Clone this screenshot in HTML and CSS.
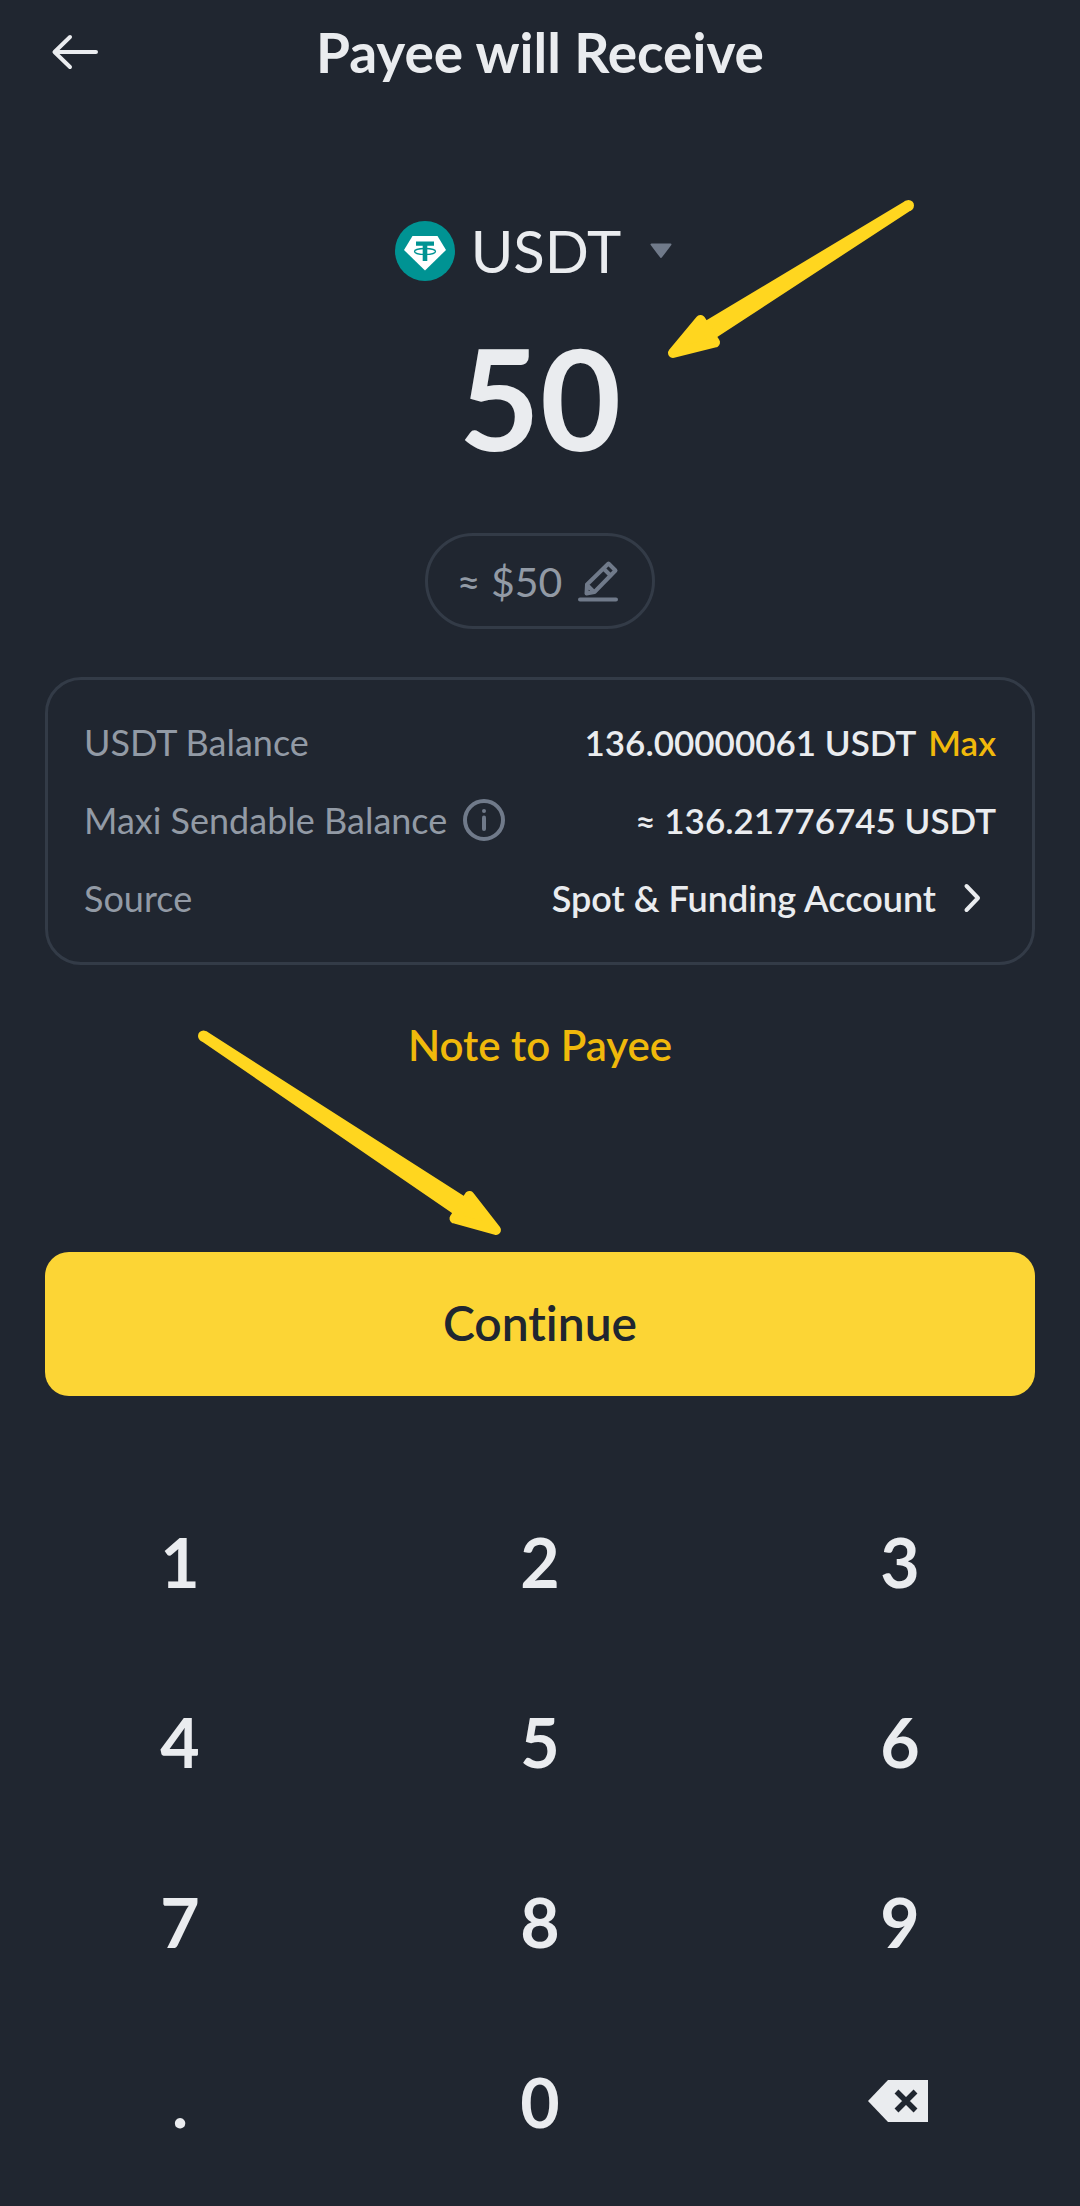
FILE: index.html
```html
<!DOCTYPE html>
<html lang="en">
<head>
  <meta charset="utf-8">
  <meta name="viewport" content="width=device-width, initial-scale=1">
  <title>Payee will Receive</title>
  <link rel="stylesheet" href="styles.css">
</head>
<body>
  <header class="topbar">
    <button class="back" type="button" aria-label="Back">
      <svg width="48" height="40" viewBox="0 0 48 40" fill="none" stroke="currentColor" stroke-width="4" stroke-linecap="round" stroke-linejoin="round"><path d="M20 5 4.500 20 20 35M5 20h41"/></svg>
    </button>
    <h1 class="title">Payee will Receive</h1>
  </header>

  <main>
    <section class="amount-block">
      <button class="token" type="button">
        <svg width="60" height="60" viewBox="0 0 60 60">
          <circle cx="30" cy="30" r="30" fill="#009393"/>
          <path d="M17.500 15h25L51 29 30 49.500 9 29z" fill="#fff"/>
          <path d="M21 20.500h18v4.200h-6.700V40h-4.600V24.700H21z" fill="#009393"/>
          <ellipse cx="30" cy="30.500" rx="10.500" ry="3" fill="none" stroke="#009393" stroke-width="1.300"/>
        </svg>
        <span>USDT</span>
        <svg width="48" height="48" viewBox="0 0 48 48"><path d="M14.500 17.500h19L24 30z" fill="#707a8a" stroke="#707a8a" stroke-width="2" stroke-linejoin="round"/></svg>
      </button>
      <input class="amount" type="text" inputmode="none" aria-label="Amount" value="50">
      <button class="fiat" type="button">
        <span>≈ $50</span>
        <svg width="44" height="44" viewBox="0 0 44 44" fill="none" stroke="#707a8a" stroke-width="4" stroke-linecap="round" stroke-linejoin="round"><path d="M4 40.500h36M11 25.500 32.500 4.500l7 7L18.500 33l-8 1.500zM28 10l6 6M12 27l5.500 5.500"/></svg>
      </button>
      <svg class="pointer pointer-amount" width="300" height="200" viewBox="0 0 300 200" fill="#ffd61f" aria-hidden="true">
        <circle cx="268.500" cy="25.500" r="5.500"/>
        <path d="M266 20.600 66 140.500 50 160l20 2 8-5.500L271.500 30z"/>
        <path d="M33 173 60.500 140 75 162.500z" stroke="#ffd61f" stroke-width="10" stroke-linejoin="round"/>
      </svg>
    </section>

    <dl class="details">
      <div class="row">
        <dt>USDT Balance</dt>
        <dd>136.00000061 USDT <button class="max" type="button">Max</button></dd>
      </div>
      <div class="row">
        <dt>Maxi Sendable Balance
          <button class="info" type="button" aria-label="About the sendable balance">
            <svg width="42" height="42" viewBox="0 0 42 42" fill="none" stroke="#707a8a" stroke-width="4" stroke-linecap="round"><circle cx="21" cy="21" r="19"/><path d="M21 18.500v11.500"/><circle cx="21" cy="12" r="2" fill="#707a8a" stroke="none"/></svg>
          </button>
        </dt>
        <dd>≈ 136.21776745 USDT</dd>
      </div>
      <div class="row">
        <dt>Source</dt>
        <dd>
          <button class="source" type="button">Spot &amp; Funding Account
            <svg width="44" height="48" viewBox="0 0 44 48" fill="none" stroke="currentColor" stroke-width="4" stroke-linecap="round" stroke-linejoin="round"><path d="M14.500 12 26 24 14.500 36"/></svg>
          </button>
        </dd>
      </div>
    </dl>

    <section class="actions">
      <button class="note" type="button">Note to Payee</button>
      <svg class="pointer pointer-continue" width="330" height="240" viewBox="0 0 330 240" fill="#ffd61f" aria-hidden="true">
        <circle cx="23.500" cy="36" r="5.500"/>
        <path d="M26.500 31.300 284 196l14 20-18 4-8-7L20.500 40.500z"/>
        <path d="M316 230 289.500 196 274.500 218.500z" stroke="#ffd61f" stroke-width="10" stroke-linejoin="round"/>
      </svg>
      <button class="continue" type="submit">Continue</button>
    </section>

    <section class="keypad" aria-label="Keypad">
      <button type="button">1</button>
      <button type="button">2</button>
      <button type="button">3</button>
      <button type="button">4</button>
      <button type="button">5</button>
      <button type="button">6</button>
      <button type="button">7</button>
      <button type="button">8</button>
      <button type="button">9</button>
      <button type="button">.</button>
      <button type="button">0</button>
      <button type="button" aria-label="Delete">
        <svg width="64" height="42" viewBox="0 0 64 42"><path d="M0 21 20 0h40v42H20z" fill="currentColor"/><path d="m28.500 11.500 19 19M47.500 11.500l-19 19" stroke="#202630" stroke-width="5.500"/></svg>
      </button>
    </section>
  </main>
</body>
</html>
```

FILE: styles.css
```css
* {
  box-sizing: border-box;
}

body {
  margin: 0;
  background: #202630;
  color: #eaecef;
  font-family: Lato, "Noto Sans", sans-serif;
  font-size: 36px;
  font-variant-ligatures: none;
}

button,
input {
  margin: 0;
  padding: 0;
  border: 0;
  background: none;
  color: inherit;
  font: inherit;
  font-variant-ligatures: none;
}

button {
  cursor: pointer;
}

svg {
  display: block;
  flex: none;
}

.topbar {
  display: grid;
  grid-template-columns: 48px 1fr 48px;
  align-items: center;
  height: 104px;
  padding: 0 50px;
}

.title {
  margin: 0;
  text-align: center;
  font-size: 55px;
  line-height: 64px;
  font-weight: 700;
}

.amount-block {
  position: relative;
  display: flex;
  flex-direction: column;
  align-items: center;
  padding-top: 117px;
}

.token {
  display: flex;
  align-items: center;
  gap: 16px;
  height: 60px;
  font-size: 58px;
  line-height: 56px;
}

.amount {
  width: 100%;
  height: 160px;
  margin-top: 36px;
  text-align: center;
  font-size: 140px;
  font-weight: 700;
}

.fiat {
  display: flex;
  align-items: center;
  gap: 14px;
  height: 96px;
  margin-top: 56px;
  padding: 0 32px 0 29px;
  border: 3px solid #333b47;
  border-radius: 48px;
  color: #929aa5;
  font-size: 41px;
}

.pointer {
  position: absolute;
  pointer-events: none;
}

.pointer-amount {
  top: 76px;
  left: calc(50% + 100px);
}

.details {
  display: flex;
  flex-direction: column;
  gap: 30px;
  margin: 48px 45px 0;
  padding: 38px 36px 40px;
  border: 3px solid #333b47;
  border-radius: 36px;
}

.row {
  display: flex;
  justify-content: space-between;
  align-items: center;
  height: 48px;
}

.row dt,
.row dd {
  display: flex;
  align-items: center;
  gap: 16px;
  margin: 0;
}

.row dt {
  color: #929aa5;
}

.row dd {
  gap: 12px;
  font-size: 35px;
  font-weight: 600;
}

.max,
.note {
  color: #f0b90b;
  font-weight: 600;
}

.source {
  display: flex;
  align-items: center;
  gap: 16px;
  font-size: 36px;
}

.actions {
  position: relative;
  display: flex;
  flex-direction: column;
  align-items: center;
  padding: 56px 45px 0;
}

.note {
  font-size: 42px;
  line-height: 48px;
}

.pointer-continue {
  top: 35px;
  left: calc(50% - 360px);
}

.continue {
  width: 100%;
  height: 144px;
  margin-top: 183px;
  padding-bottom: 4px;
  border-radius: 24px;
  background: #fcd535;
  color: #202630;
  font-size: 48px;
  font-weight: 600;
}

.keypad {
  display: grid;
  grid-template-columns: repeat(3, 1fr);
  grid-auto-rows: 180px;
  margin-top: 75px;
  font-size: 68px;
  font-weight: 700;
}

.keypad button {
  display: flex;
  align-items: center;
  justify-content: center;
}
```
